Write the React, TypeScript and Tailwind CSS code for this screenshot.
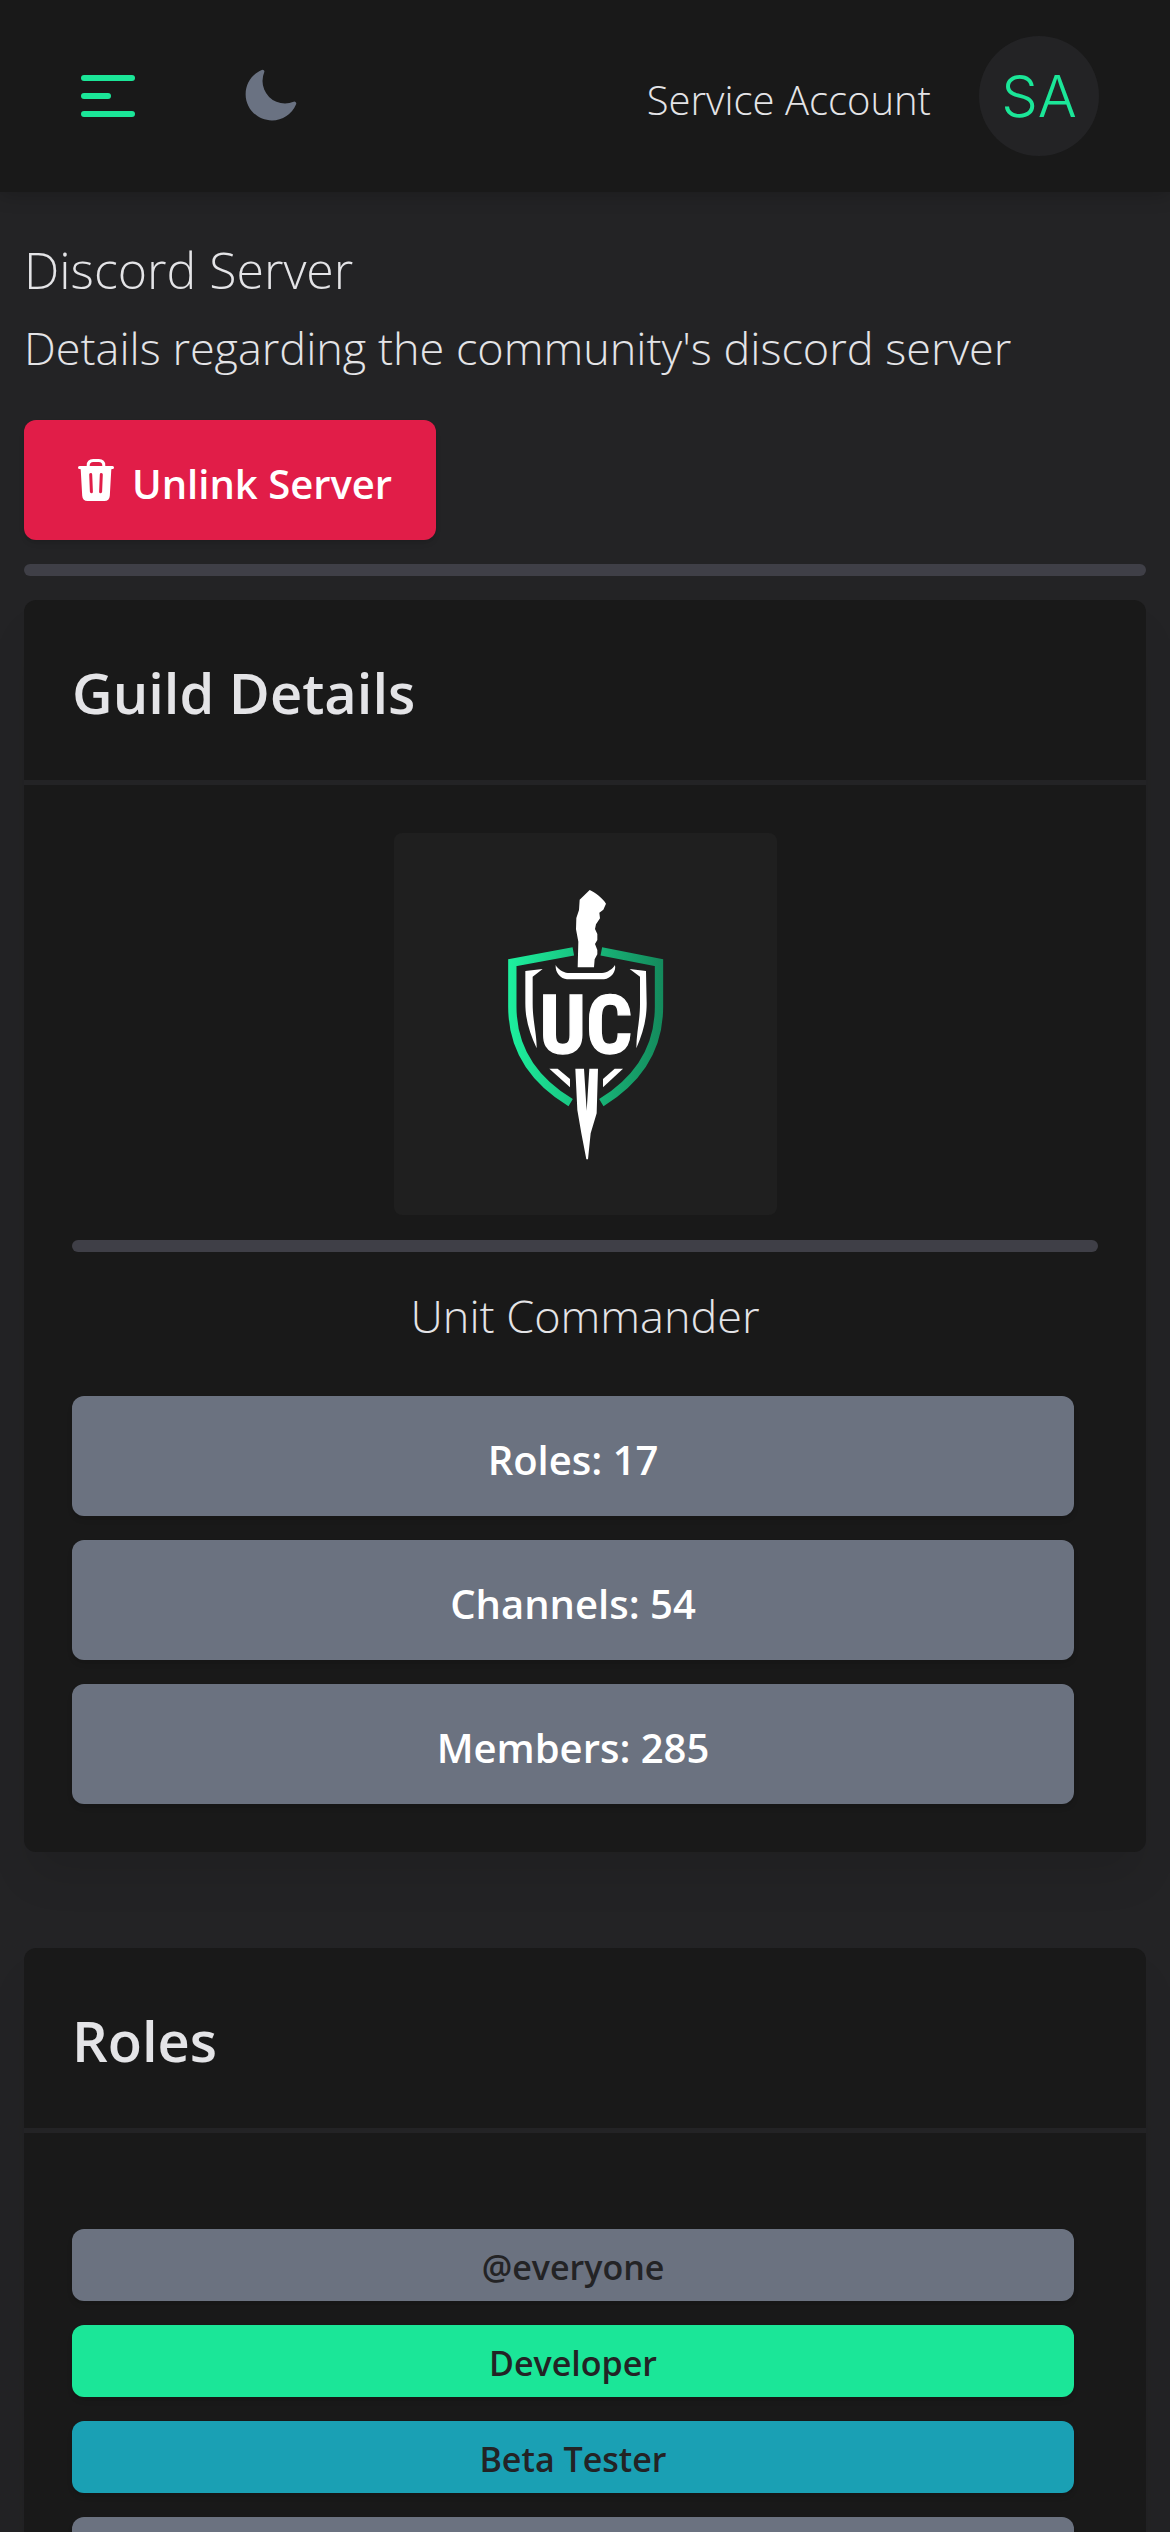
import clsx from 'clsx'
import { useId, type ReactNode } from 'react'

interface Role {
  id: number
  name?: string
  color: string
}

const STATS = [
  { label: 'Roles', value: 17 },
  { label: 'Channels', value: 54 },
  { label: 'Members', value: 285 },
]

const ROLES: Role[] = [
  { id: 1, name: '@everyone', color: 'bg-[#6b7280]' },
  { id: 2, name: 'Developer', color: 'bg-[#1be698]' },
  { id: 3, name: 'Beta Tester', color: 'bg-[#1aa0b4]' },
  { id: 4, color: 'bg-[#6b7280]' },
]

function MoonIcon() {
  return (
    <svg viewBox="0 0 24 24" fill="currentColor" className="size-15" aria-hidden="true">
      <path d="M9.528 1.718a.75.75 0 0 1 .162.819A8.97 8.97 0 0 0 9 6a9 9 0 0 0 9 9 8.97 8.97 0 0 0 3.463-.69.75.75 0 0 1 .981.98 10.503 10.503 0 0 1-9.694 6.46c-5.799 0-10.5-4.7-10.5-10.5 0-4.368 2.667-8.112 6.46-9.694a.75.75 0 0 1 .818.162Z" />
    </svg>
  )
}

function TrashIcon() {
  return (
    <svg viewBox="0 0 36 42" className="h-[42px] w-9" aria-hidden="true">
      <path d="M10.200 8.500V6.500q0-5 5-5h5.600q5 0 5 5v2" fill="none" stroke="white" strokeWidth="3" />
      <path
        fill="white"
        d="M1.500 7h33a1.500 1.500 0 0 1 0 3l-1.200.2-1.500 26.500q-.4 5.300-5.500 5.300H9.700q-5.100 0-5.500-5.300L2.700 10.200 1.500 10a1.500 1.500 0 0 1 0-3z"
      />
      <path
        d="M12.700 15.500l.7 17.200M23.300 15.500l-.7 17.200"
        fill="none"
        stroke="#e11d48"
        strokeWidth="3"
        strokeLinecap="round"
      />
    </svg>
  )
}

function GuildLogo() {
  const gradientId = useId()
  return (
    <svg
      viewBox="-228 -81 1149 1146"
      role="img"
      aria-label="Unit Commander logo"
      className="h-[382px] w-[383px] rounded-lg bg-[#1f1f1f]"
    >
      <defs>
        <linearGradient id={gradientId} gradientUnits="userSpaceOnUse" x1="115" y1="400" x2="580" y2="400">
          <stop offset="0" stopColor="#1df09e" />
          <stop offset="1" stopColor="#148a5c" />
        </linearGradient>
      </defs>
      <g fill="none" stroke={`url(#${gradientId})`} strokeWidth="25">
        <path d="M310 274L127 308V440C127 570 196 664 302 728" />
        <path d="M394 274L567 308V440C567 570 498 664 394 728" />
      </g>
      <g fill="white">
        <path d="M359 90C374 96 398 114 408 131L400 149L388 158L390 175L378 193L375 207L382 222V240L375 252L382 270V283L374 298L372 322H323L325 245L318 208L319 174L327 150L329 119Z" />
        <path d="M257 315C263 326 278 338 294 339H396C412 338 428 327 435 315C439 334 424 355 402 358H291C272 356 255 338 257 315Z" />
        <path d="M166 333L218 327L188 350V430C188 484 200 518 200 565C180 520 166 482 166 430Z" />
        <path d="M528 333L479 327L510 350V430C510 484 499 518 499 565C518 520 530 482 530 430Z" />
        <path d="M238 626H263L300 657V682Z" />
        <path d="M459 626H434L399 657V682Z" />
        <path d="M316 626H342L350 752L358 626H384L380 760L362 820L354 898H349L334 820L322 750Z" />
      </g>
      <text
        x="348"
        y="579"
        textAnchor="middle"
        fill="white"
        stroke="white"
        strokeWidth="4"
        className="font-['Liberation_Sans_Narrow','Roboto_Condensed','DejaVu_Sans_Condensed',sans-serif] text-[244px] font-bold"
      >
        UC
      </text>
    </svg>
  )
}

function Divider() {
  return <hr className="h-3 rounded-md border-0 bg-zinc-700" />
}

interface CardProps {
  title: string
  children: ReactNode
}

function Card({ title, children }: CardProps) {
  return (
    <section className="rounded-xl bg-[#191919] shadow-[0_30px_45px_-9px_rgba(0,0,0,0.1)]">
      <header className="flex h-[185px] items-center border-b-[5px] border-[#232325] px-12 pt-1">
        <h2 className="text-[56px] leading-[84px] font-semibold">{title}</h2>
      </header>
      {children}
    </section>
  )
}

export default function App() {
  return (
    <div className="flex h-screen flex-col overflow-hidden bg-[#232325] font-['Open_Sans','Noto_Sans',sans-serif] text-zinc-200">
      <header className="flex h-48 shrink-0 items-center bg-[#191919] pr-[71px] pl-[81px] shadow-[0_3px_18px_rgba(0,0,0,0.2)]">
        <button type="button" aria-label="Toggle menu" className="flex w-[54px] flex-col gap-3">
          <span className="h-1.5 w-full rounded-full bg-[#1be698]" />
          <span className="h-1.5 w-[30px] rounded-full bg-[#1be698]" />
          <span className="h-1.5 w-full rounded-full bg-[#1be698]" />
        </button>
        <button type="button" aria-label="Toggle dark mode" className="ml-[105px] text-gray-500">
          <MoonIcon />
        </button>
        <div className="ml-auto flex items-center gap-12">
          <span className="pt-2 text-[40px] leading-15 font-light">Service Account</span>
          <span className="flex size-30 items-center justify-center rounded-full bg-[#232325] font-['Inter',sans-serif] text-[58px] font-light text-[#1be698]">
            SA
          </span>
        </div>
      </header>

      <main className="flex flex-col px-6 pt-9">
        <h1 className="text-[50px] leading-[84px] font-light">Discord Server</h1>
        <p className="text-[45px] leading-18 font-light">Details regarding the community&apos;s discord server</p>

        <button
          type="button"
          className="mt-9 mb-6 flex h-30 items-center gap-[18px] self-start rounded-xl bg-[#e11d48] pr-11 pl-[54px] text-[40px] font-semibold text-white shadow-md"
        >
          <TrashIcon />
          <span className="pt-2">Unlink Server</span>
        </button>
        <Divider />

        <div className="mt-6 flex flex-col gap-24">
          <Card title="Guild Details">
            <div className="flex flex-col p-12">
              <div className="mb-[25px] flex justify-center">
                <GuildLogo />
              </div>
              <Divider />
              <p className="pt-7 pb-11 text-center text-[45px] leading-18 font-light">Unit Commander</p>
              <div className="flex flex-col gap-6 pr-6">
                {STATS.map((stat) => (
                  <button
                    key={stat.label}
                    type="button"
                    className="h-30 rounded-xl bg-[#6b7280] pt-2 text-[40px] font-semibold text-white shadow-md"
                  >
                    {stat.label}: {stat.value}
                  </button>
                ))}
              </div>
            </div>
          </Card>

          <Card title="Roles">
            <ul className="flex flex-col gap-6 py-24 pr-18 pl-12">
              {ROLES.map((role) => (
                <li
                  key={role.id}
                  className={clsx(
                    'flex h-18 items-center justify-center rounded-xl pt-1 text-[34px] font-semibold text-[#232325] shadow-md',
                    role.color,
                  )}
                >
                  {role.name}
                </li>
              ))}
            </ul>
          </Card>
        </div>
      </main>
    </div>
  )
}
